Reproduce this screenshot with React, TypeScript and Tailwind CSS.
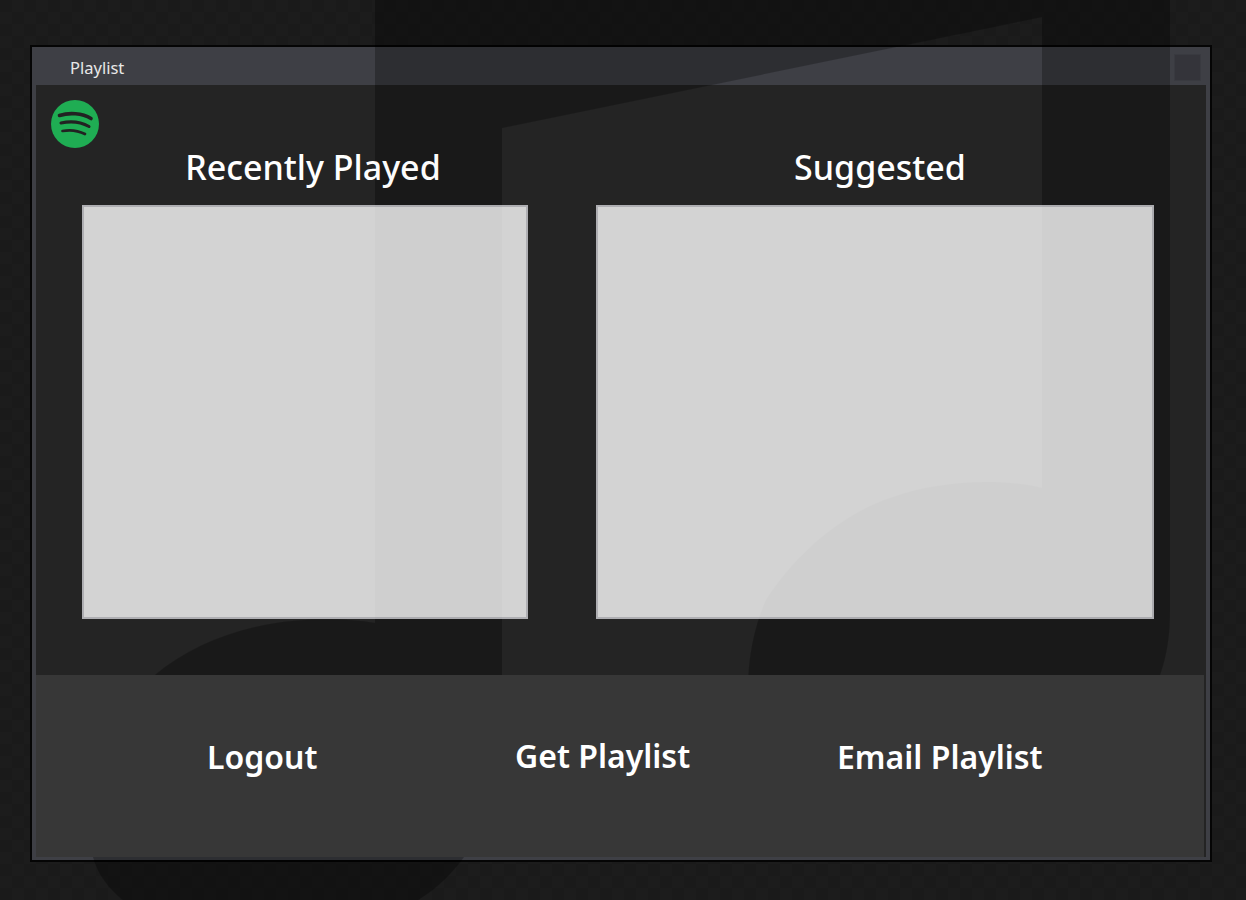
const Note = ({ className }: { className: string }) => (
  <svg className={className} width="1246" height="900" viewBox="0 0 1246 900" aria-hidden="true">
    <path
      d="M375 -20 L375 623 C345 618 305 618 270 624 C225 632 185 650 155 675 C110 712 85 770 93 857 C98 875 110 890 123 900 L418 900 C438 888 452 873 464 857 C490 825 502 790 502 760 L502 128 L1042 17 L1042 488 C1000 478 940 480 890 498 C840 515 795 555 766 600 C755 625 748 655 748 690 C755 760 800 810 870 820 C960 830 1060 790 1120 730 C1140 712 1152 695 1160 675 C1167 655 1170 635 1170 610 L1170 -20 Z"
      fill="#000"
    />
  </svg>
);

const Spotify = () => (
  <svg width="50" height="50" viewBox="0 0 50 50" aria-hidden="true" className="block">
    <circle cx="25" cy="25" r="24" fill="#1fad53" />
    <path d="M9.5 16.5 C19 13.5 32 14 41 19.5" fill="none" stroke="#222" strokeWidth="3.6" strokeLinecap="round" />
    <path d="M11 24 C20 22 31 23 39 27.5" fill="none" stroke="#222" strokeWidth="3.1" strokeLinecap="round" />
    <path d="M12.5 32 C20 30.5 28 31.5 35 35" fill="none" stroke="#222" strokeWidth="2.7" strokeLinecap="round" />
  </svg>
);

export default function App() {
  const font = { fontFamily: "'Noto Sans', sans-serif" };
  return (
    <div
      style={font}
      className="relative w-[1246px] h-[900px] overflow-hidden bg-[#1b1b1b] bg-[repeating-conic-gradient(#1c1c1c_0_25%,#1a1a1a_0_50%)] bg-[length:24px_24px] pt-[45px] pl-[30px]"
    >
      <div className="w-[1182px] h-[817px] border-2 border-[#050505] bg-[#3e3f45] flex flex-col">
        <div className="h-[38px] flex items-start text-[#e8e8e8] pl-[38px] pr-[9px] justify-between">
          <span className="relative z-10 text-[16.5px] leading-[32px] h-[32px] mt-[5px]">Playlist</span>
          <div className="mt-[7px] w-[27px] h-[27px] bg-[#34343a] border border-[#393a40]" />
        </div>
        <div className="ml-[4px] w-[1170px] h-[772px] bg-[#242424] relative">
          <div className="relative z-10 pl-[14px] pt-[14px]">
            <Spotify />
          </div>
        </div>
      </div>

      <Note className="absolute left-0 top-0 opacity-25" />

      <div className="absolute left-[82px] top-[145px] z-10 flex text-white font-medium text-[34px] leading-[44px]">
        <h2 className="w-[462px] text-center font-medium">Recently Played</h2>
        <h2 className="w-[672px] text-center font-medium">Suggested</h2>
      </div>

      <div className="absolute left-[82px] top-[205px] z-10 flex gap-[68px]">
        <div className="w-[446px] h-[414px] bg-[#d3d3d3] border-2 border-[#aeaeb2]" />
        <div className="w-[558px] h-[414px] bg-[#d3d3d3] border-2 border-[#aeaeb2]" />
      </div>

      <Note className="absolute left-0 top-0 z-20 opacity-[0.012]" />

      <div className="absolute z-30 left-[36px] top-[675px] w-[1168px] h-[182px] bg-[#373737] text-white font-semibold text-[32px]">
        <button className="absolute left-[171px] top-[60px] leading-[44px] font-semibold">Logout</button>
        <button className="absolute left-[479px] top-[59px] leading-[44px] font-semibold">Get Playlist</button>
        <button className="absolute left-[801px] top-[60px] leading-[44px] font-semibold">Email Playlist</button>
      </div>
    </div>
  );
}
